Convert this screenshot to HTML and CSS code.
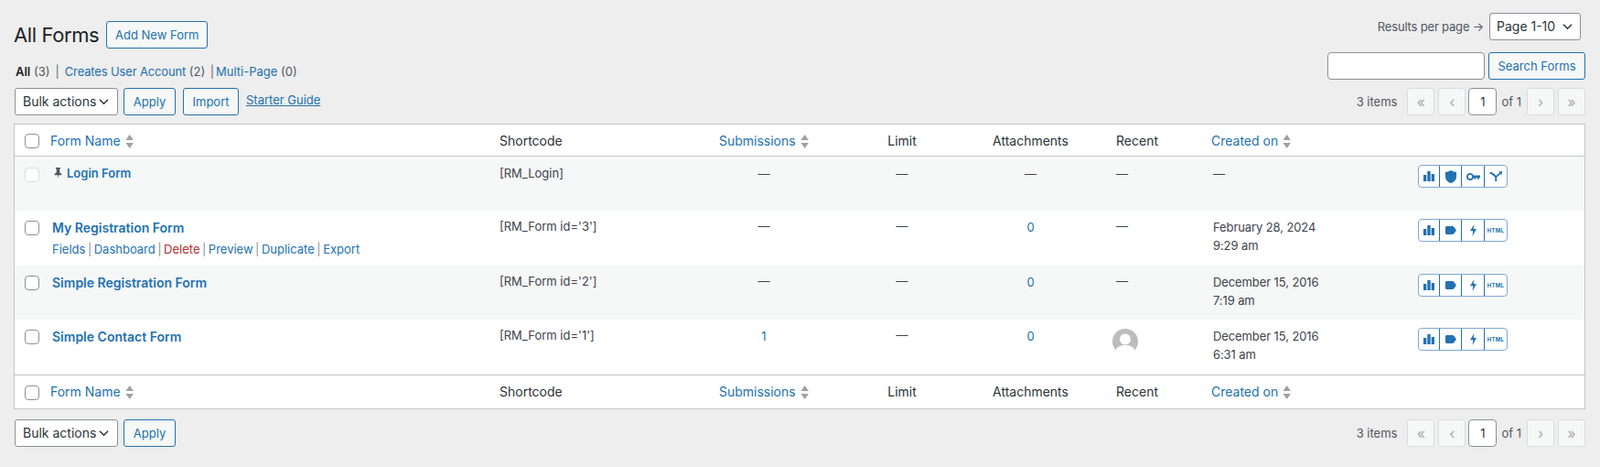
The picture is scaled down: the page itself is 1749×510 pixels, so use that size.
FILE: index.html
```html
<!DOCTYPE html>
<html lang="en">
<head>
<meta charset="utf-8">
<title>All Forms</title>
<link rel="stylesheet" href="styles.css">
</head>
<body>
<svg class="defs" width="0" height="0" aria-hidden="true">
  <symbol id="sort" viewBox="0 0 10 16"><path d="M5 0 9.500 6.500H.5zM5 16 .5 9.500h9z"/></symbol>
  <symbol id="bars" viewBox="0 0 12 11"><path d="M0 4h3.300v7H0zM4.300 0h3.400v11H4.300zM8.700 3H12v8H8.700z"/></symbol>
  <symbol id="shield" viewBox="0 0 12 14"><path d="M6 0c1.800 1.200 3.800 1.700 6 1.800V7c0 3.500-2.500 5.800-6 7-3.500-1.200-6-3.500-6-7V1.800C2.200 1.700 4.200 1.200 6 0z"/></symbol>
  <symbol id="key" viewBox="0 0 15 8"><path fill-rule="evenodd" d="M4 0a4 4 0 0 1 3.800 2.500H15v2.700h-1.300v1.600h-1.900V5.200H10v1.200H8.200V5.200h-.4A4 4 0 1 1 4 0zm0 1.800a2.200 2.200 0 1 0 0 4.400 2.200 2.200 0 0 0 0-4.400z"/></symbol>
  <symbol id="split" viewBox="0 0 14 11"><path d="M0 2.400 1.200.8c2.300.3 4.200 2 6.100 4.100L11.300 1.800 9.800.6 14 0l-.4 4.300-1.200-1.300L8.200 6.500V11H6.300V6.700C4.500 4.600 2.300 2.700 0 2.400z"/></symbol>
  <symbol id="tag" viewBox="0 0 12 9"><path d="M1.500 0H8c1 0 3 3 4 4.500C11 6 9 9 8 9H1.500C.5 9 0 8.400 0 7.500v-6C0 .6.500 0 1.500 0z"/></symbol>
  <symbol id="bolt" viewBox="0 0 7 13"><path d="M4.500 0 3.700 5H7l-4.500 8 .8-5.700H0z"/></symbol>
  <symbol id="pin" viewBox="0 0 10 14"><path d="M2 0h6v1.200L7 2v4l2.500 2.200V9.500H5.600L5 14l-.6-4.500H.5V8.200L3 6V2L2 1.200z"/></symbol>
</svg>

<div class="wrap">
  <header class="top">
    <div class="top-left">
      <div class="title-row">
        <h1 class="title">All Forms</h1>
        <a class="btn btn-add">Add New Form</a>
      </div>
      <p class="filters"><b class="cur">All</b> <span class="cnt">(3)</span><span class="sep s1">|</span><a class="acct">Creates User Account</a> <span class="cnt">(2)</span><span class="sep s2">|</span><a>Multi-Page</a> <span class="cnt">(0)</span></p>
      <div class="nav-left">
        <div class="select sel-bulk">Bulk actions<svg class="chev" viewBox="0 0 12 8"><path d="M1 1.500 6 6.500l5-5"/></svg></div>
        <a class="btn btn-apply">Apply</a>
        <a class="btn btn-import">Import</a>
        <a class="guide">Starter Guide</a>
      </div>
    </div>
    <div class="top-right">
      <div class="perpage">
        <span class="muted">Results per page →</span>
        <div class="select sel-page">Page 1-10<svg class="chev" viewBox="0 0 12 8"><path d="M1 1.500 6 6.500l5-5"/></svg></div>
      </div>
      <div class="search">
        <div class="input"></div>
        <a class="btn btn-search">Search Forms</a>
      </div>
      <div class="pager">
        <span class="muted items">3 items</span>
        <span class="pg">«</span><span class="pg">‹</span><span class="pg-cur">1</span><span class="muted of">of 1</span><span class="pg">›</span><span class="pg">»</span>
      </div>
    </div>
  </header>

  <table class="forms">
    <colgroup>
      <col class="c-cb"><col class="c-name"><col class="c-short"><col class="c-sub"><col class="c-limit"><col class="c-att"><col class="c-rec"><col class="c-date"><col class="c-act">
    </colgroup>
    <thead>
      <tr>
        <th><span class="cb"></span></th>
        <th class="th-name"><a>Form Name</a><svg class="sort"><use href="#sort"/></svg></th>
        <th>Shortcode</th>
        <th class="ctr"><a>Submissions</a><svg class="sort"><use href="#sort"/></svg></th>
        <th class="ctr">Limit</th>
        <th class="ctr">Attachments</th>
        <th class="rec">Recent</th>
        <th><a>Created on</a><svg class="sort"><use href="#sort"/></svg></th>
        <th></th>
      </tr>
    </thead>
    <tbody>
      <tr class="alt first">
        <td><span class="cb cb-off"></span></td>
        <td class="name name-pin"><svg class="pin"><use href="#pin"/></svg><a class="login">Login Form</a></td>
        <td class="code">[RM_Login]</td>
        <td class="ctr">—</td><td class="ctr">—</td><td class="ctr">—</td><td class="rec">—</td><td class="date">—</td>
        <td><div class="tools">
          <a class="t t1"><svg class="i-bars"><use href="#bars"/></svg></a><a class="t t2"><svg class="i-shield"><use href="#shield"/></svg></a><a class="t t3"><svg class="i-key"><use href="#key"/></svg></a><a class="t t4"><svg class="i-split"><use href="#split"/></svg></a>
        </div></td>
      </tr>
      <tr>
        <td><span class="cb"></span></td>
        <td class="name"><a class="strong">My Registration Form</a>
          <div class="row-actions"><a>Fields</a><i>|</i><a>Dashboard</a><i>|</i><a class="del">Delete</a><i>|</i><a>Preview</a><i>|</i><a>Duplicate</a><i>|</i><a>Export</a></div>
        </td>
        <td class="code">[RM_Form id='3']</td>
        <td class="ctr">—</td><td class="ctr">—</td><td class="ctr num"><a>0</a></td><td class="rec">—</td>
        <td class="date">February 28, 2024<br>9:29 am</td>
        <td><div class="tools">
          <a class="t t1"><svg class="i-bars"><use href="#bars"/></svg></a><a class="t t2"><svg class="i-tag"><use href="#tag"/></svg></a><a class="t t3"><svg class="i-bolt"><use href="#bolt"/></svg></a><a class="t t4 html">HTML</a>
        </div></td>
      </tr>
      <tr class="alt">
        <td><span class="cb"></span></td>
        <td class="name"><a class="strong">Simple Registration Form</a></td>
        <td class="code">[RM_Form id='2']</td>
        <td class="ctr">—</td><td class="ctr">—</td><td class="ctr num"><a>0</a></td><td class="rec">—</td>
        <td class="date">December 15, 2016<br>7:19 am</td>
        <td><div class="tools">
          <a class="t t1"><svg class="i-bars"><use href="#bars"/></svg></a><a class="t t2"><svg class="i-tag"><use href="#tag"/></svg></a><a class="t t3"><svg class="i-bolt"><use href="#bolt"/></svg></a><a class="t t4 html">HTML</a>
        </div></td>
      </tr>
      <tr>
        <td><span class="cb"></span></td>
        <td class="name"><a class="strong">Simple Contact Form</a></td>
        <td class="code">[RM_Form id='1']</td>
        <td class="ctr num"><a>1</a></td><td class="ctr">—</td><td class="ctr num"><a>0</a></td>
        <td class="td-av"><svg class="avatar" viewBox="0 0 28 28"><circle cx="14" cy="14" r="14" fill="#bdbdbd"/><circle cx="14" cy="11.500" r="6" fill="#fff"/><path d="M3.500 23.500C5 19.500 9 18 14 18s9 1.500 10.500 5.500L21 28H7z" fill="#fff"/></svg></td>
        <td class="date">December 15, 2016<br>6:31 am</td>
        <td><div class="tools">
          <a class="t t1"><svg class="i-bars"><use href="#bars"/></svg></a><a class="t t2"><svg class="i-tag"><use href="#tag"/></svg></a><a class="t t3"><svg class="i-bolt"><use href="#bolt"/></svg></a><a class="t t4 html">HTML</a>
        </div></td>
      </tr>
    </tbody>
    <tfoot>
      <tr>
        <th><span class="cb"></span></th>
        <th class="th-name"><a>Form Name</a><svg class="sort"><use href="#sort"/></svg></th>
        <th>Shortcode</th>
        <th class="ctr"><a>Submissions</a><svg class="sort"><use href="#sort"/></svg></th>
        <th class="ctr">Limit</th>
        <th class="ctr">Attachments</th>
        <th class="rec">Recent</th>
        <th><a>Created on</a><svg class="sort"><use href="#sort"/></svg></th>
        <th></th>
      </tr>
    </tfoot>
  </table>

  <footer class="bottom">
    <div class="nav-left">
      <div class="select sel-bulk">Bulk actions<svg class="chev" viewBox="0 0 12 8"><path d="M1 1.500 6 6.500l5-5"/></svg></div>
      <a class="btn btn-apply">Apply</a>
    </div>
    <div class="pager">
      <span class="muted items">3 items</span>
      <span class="pg">«</span><span class="pg">‹</span><span class="pg-cur">1</span><span class="muted of">of 1</span><span class="pg">›</span><span class="pg">»</span>
    </div>
  </footer>
</div>
</body>
</html>
```

FILE: styles.css
```css
* { box-sizing: border-box; }
html, body { margin: 0; padding: 0; }
body {
  background: #eeeeee;
  color: #3c434a;
  font-family: Inter, "Liberation Sans", sans-serif;
  font-size: 13px;
  line-height: 20px;
  overflow: hidden;
}
.defs { position: absolute; }
a { color: #2271b1; text-decoration: none; }

.wrap { padding: 14px 16px 0 15px; }

.top { display: flex; justify-content: space-between; align-items: stretch; height: 112px; }
.top-left { display: flex; flex-direction: column; }
.top-right { display: flex; flex-direction: column; align-items: flex-end; }

.title-row { display: flex; align-items: center; height: 30px; margin-top: 9px; }
.title { margin: 0 8px 0 0; font-size: 22px; letter-spacing: -.4px; font-weight: 400; line-height: 30px; color: #1d2327; }

.btn {
  display: flex; align-items: center; justify-content: center;
  height: 30px;
  border: 1px solid #2271b1;
  border-radius: 3px;
  background: #f6f7f7;
  color: #2271b1;
  font-size: 13px;
}
.btn-add { width: 111px; }

.filters { margin: 15px 0 0 2px; height: 20px; font-size: 13px; white-space: nowrap; }
.filters .cur { color: #1d2327; font-weight: 600; }
.acct { letter-spacing: -.15px; }
.cnt { color: #50575e; }
.sep { color: #646970; }
.s1 { margin: 0 6px 0 6px; }
.s2 { margin: 0 2px 0 5.500px; }

.nav-left { display: flex; align-items: flex-start; }
.top-left .nav-left { margin-top: 8px; margin-left: 1px; }

.select {
  display: flex; align-items: center; justify-content: space-between;
  height: 30px;
  padding: 0 9px 0 8px;
  background: #fff;
  border: 1px solid #8c8f94;
  border-radius: 3px;
  color: #2c3338;
  font-size: 14px;
}
.sel-bulk { width: 113px; }
.sel-page { width: 100px; padding: 0 8px 0 7px; }
.chev { width: 11px; height: 8px; }
.chev path { fill: none; stroke: #2c3338; stroke-width: 1.500; }

.btn-apply { width: 57px; margin-left: 6px; }
.btn-import { width: 61px; margin-left: 8px; }
.guide { margin: 3px 0 0 8px; text-decoration: underline; }

.perpage { display: flex; align-items: center; height: 30px; margin-right: 5px; }
.perpage .muted { margin-right: 6px; letter-spacing: -.18px; }
.muted { color: #50575e; }

.search { display: flex; margin-top: 13px; }
.input { width: 172px; height: 30px; background: #fff; border: 1px solid #8c8f94; border-radius: 4px; }
.btn-search { width: 106px; margin-left: 4px; }

.pager { display: flex; align-items: center; height: 30px; }
.top-right .pager { margin-top: 9px; }
.items { margin-right: 11px; }
.pg {
  display: flex; align-items: center; justify-content: center;
  width: 30px; height: 30px; margin-left: 4px;
  background: #f6f7f7;
  border: 1px solid #dcdcde;
  border-radius: 3px;
  color: #a7aaad;
  font-size: 16px;
}
.items + .pg { margin-left: 0; }
.pg-cur {
  display: flex; align-items: center; justify-content: center;
  width: 31px; height: 30px; margin-left: 3px;
  background: #fff;
  border: 1px solid #8c8f94;
  border-radius: 4px;
  color: #2c3338;
}
.of { margin: 0 6px 0 5px; }
.of + .pg { margin-left: 0; }

.forms {
  width: 1718px;
  table-layout: fixed;
  border-collapse: separate;
  border-spacing: 0;
  background: #fff;
  border: 1px solid #c3c4c7;
  margin-top: 9px;
}
.c-cb { width: 32px; }
.c-name { width: 488px; }
.c-short { width: 211px; }
.c-sub { width: 176px; }
.c-limit { width: 126px; }
.c-att { width: 155px; }
.c-rec { width: 110px; }
.c-date { width: 226px; }

th, td { padding: 0 10px; text-align: left; vertical-align: top; }
th {
  font-weight: 400; color: #2c3338; font-size: 14px;
  height: 35px; padding-top: 8px; white-space: nowrap;
}
thead th { border-bottom: 1px solid #c3c4c7; }
tfoot th { border-top: 1px solid #c3c4c7; height: 37px; padding-top: 8px; }
td { height: 60px; padding-top: 7px; padding-bottom: 0; }
tbody tr:nth-child(3) td { height: 59px; }
tr.alt td { background: #f6f7f7; }
.ctr { text-align: center; }
th:first-child, td:first-child { padding: 0 0 0 11px; }
thead th:first-child { padding-top: 10px; }
tfoot th:first-child { padding-top: 11px; }
td:first-child { padding-top: 11px; }
.cb { display: block; width: 16px; height: 16px; background: #fff; border: 1px solid #8c8f94; border-radius: 4px; }
.cb-off { border-color: #dcdcde; }
th.th-name { padding-left: 7px; }
td.name { padding-left: 9px; padding-top: 9px; }
td.num { padding-top: 8px; }
td.date { padding-left: 12px; padding-top: 8px; letter-spacing: -.1px; }
.rec { padding-left: 16px; }

tr.first td { height: 59px; padding-top: 9px; }
tr.first td:first-child { padding-top: 12px; }
tr.first td.code { padding-top: 8px; }
tr.first td.name-pin { padding-left: 11px; padding-top: 8px; }

.sort { width: 9.400px; height: 15px; margin-left: 5px; fill: #a0a0a0; vertical-align: -3px; }
.pin { width: 9px; height: 12px; margin-right: 5px; fill: #50575e; vertical-align: -1px; }
.login { font-weight: 600; font-size: 13px; color: #2271b1; }
.strong { font-weight: 600; font-size: 14px; }
.row-actions { margin-top: 3px; font-size: 13px; white-space: nowrap; }
.row-actions i { font-style: normal; color: #8c8f94; margin: 0 2.500px; }
.del { color: #b32d2e; }

td.td-av { padding: 10px 0 0 12px; }
.avatar { display: block; width: 28px; height: 28px; }

.tools {
  display: flex; width: 98px; height: 25px; margin: 2px 0 0 0;
  background: #fff;
  border: 1px solid #7fa9d3;
  border-radius: 4px;
}
tr.first .tools { margin-top: 0; }
.t { display: flex; align-items: center; justify-content: center; height: 100%; border-left: 1px solid #2271b1; fill: #2271b1; }
.t1 { width: 22px; border-left: 0; }
.t2 { width: 24px; }
.t3 { width: 25px; }
.t4 { width: 25px; }
.i-bars { width: 12px; height: 11px; }
.i-shield { width: 12px; height: 14px; }
.i-key { width: 15px; height: 8px; }
.i-split { width: 14px; height: 11px; }
.i-tag { width: 12px; height: 9px; }
.i-bolt { width: 7px; height: 13px; }
.html { font-size: 6px; font-weight: 700; letter-spacing: .2px; color: #2271b1; line-height: 10px; }

.bottom { display: flex; justify-content: space-between; margin-top: 11px; padding-left: 1px; }
```
